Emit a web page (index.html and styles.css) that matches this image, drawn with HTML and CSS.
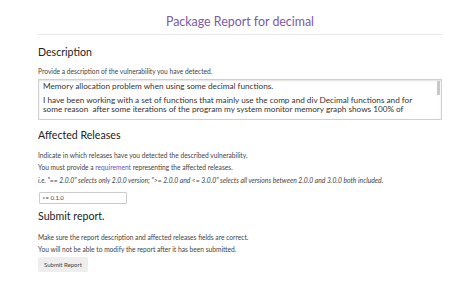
FILE: index.html
```html
<!DOCTYPE html>
<html>
<head>
<meta charset="utf-8">
<link rel="stylesheet" href="styles.css">
</head>
<body>
<div class="page">
  <h1 class="title">Package Report for decimal</h1>
  <h2 class="section first">Description</h2>
  <p class="note lead">Provide a description of the vulnerability you have detected.</p>
  <div class="textarea">
    <div class="ta-text">
      <p>Memory allocation problem when using some decimal functions.</p>
      <p>I have been working with a set of functions that mainly use the comp and div Decimal functions and for some reason &nbsp;after some iterations of the program my system monitor memory graph shows 100% of</p>
    </div>
    <div class="scroll"></div>
  </div>
  <h2 class="section">Affected Releases</h2>
  <p class="note lead2">Indicate in which releases have you detected the described vulnerability.</p>
  <p class="note">You must provide a <a class="link">requirement</a> representing the affected releases.</p>
  <p class="note ital">i.e. "== 2.0.0" selects only 2.0.0 version; "&gt;= 2.0.0 and &lt;= 3.0.0" selects all versions between 2.0.0 and 3.0.0 both included.</p>
  <div class="input">&gt;= 0.1.0</div>
  <h2 class="section sub">Submit report.</h2>
  <p class="note lead3">Make sure the report description and affected releases fields are correct.</p>
  <p class="note">You will not be able to modify the report after it has been submitted.</p>
  <div class="btn">Submit Report</div>
</div>
</body>
</html>
```
FILE: styles.css
```css
html, body { margin: 0; padding: 0; background: #fff; }
body { font-family: Lato, "Noto Sans", sans-serif; color: #333; }
.page { margin: 0 32px 0 38px; display: flex; flex-direction: column; align-items: flex-start; }
.title { align-self: stretch; text-align: center; font-weight: 400; font-size: 12.4px; color: #7b5aa6; margin: 14px 0 0; padding-bottom: 4px; border-bottom: 1px solid #e6e6e6; line-height: 16px; }
.section { font-weight: 400; font-size: 10.6px; color: #222; margin: 8.5px 0 0; line-height: 13px; }
.section.first { margin-top: 10.5px; }
.note { font-size: 6.65px; color: #444; margin: 4px 0 0; line-height: 8px; white-space: nowrap; }
.note.lead { margin-top: 8.5px; }
.note.lead2 { margin-top: 9.5px; }
.note.lead3 { margin-top: 10.5px; }
.ital { font-style: italic; margin-top: 5px; font-size: 6.75px; }
.link { color: #6a4fc0; }
.textarea { align-self: stretch; margin-top: 4px; height: 39px; border: 1px solid #cfcfcf; box-shadow: inset 0 1px 2px rgba(0,0,0,0.12); display: flex; overflow: hidden; }
.ta-text { flex: 1; padding: 2px 4px; font-size: 8.2px; color: #333; line-height: 9px; }
.ta-text p { margin: 0 0 5px; }
.scroll { width: 3px; height: 14px; background: #c8c8c8; margin: 1px 1px 0 0; }
.input { margin-top: 8px; margin-left: 1px; width: 82px; height: 10px; border: 1px solid #ccc; border-radius: 1px; font-size: 6px; line-height: 10px; padding: 0 2px; color: #444; }
.sub { margin-top: 5.5px; }
.btn { margin-top: 4px; background: #eeeeee; font-size: 6px; line-height: 7px; padding: 4px 6px; color: #444; border-radius: 2px; }
```
